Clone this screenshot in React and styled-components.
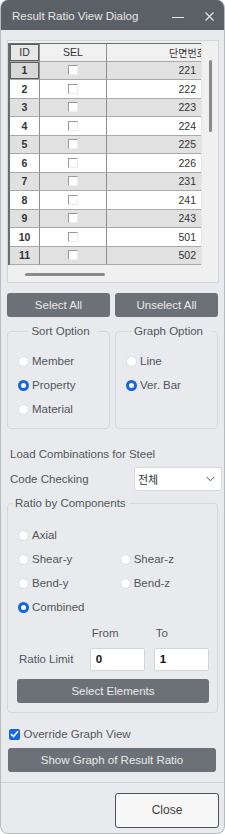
import styled, { createGlobalStyle } from "styled-components";

const GlobalStyle = createGlobalStyle`
  html, body {
    margin: 0;
    padding: 0;
    background: #ffffff;
  }
  * {
    box-sizing: border-box;
  }
`;

const rows = [221, 222, 223, 224, 225, 226, 231, 241, 243, 501, 502];

function Radio({ checked, children }) {
  return (
    <RadioRow>
      <RadioDot checked={checked} />
      <span>{children}</span>
    </RadioRow>
  );
}

function App() {
  return (
    <>
      <GlobalStyle />
      <Dialog>
        <TitleBar>
          <Title>Result Ratio View Dialog</Title>
          <TitleIcons>
            <svg width="12" height="12" viewBox="0 0 12 12">
              <line x1="0" y1="6.5" x2="12" y2="6.5" stroke="#e4e4e4" strokeWidth="1.2" />
            </svg>
            <svg width="9" height="9" viewBox="0 0 9 9">
              <path d="M0.5 0.5 L8.5 8.5 M8.5 0.5 L0.5 8.5" stroke="#e4e4e4" strokeWidth="1.2" />
            </svg>
          </TitleIcons>
        </TitleBar>

        <Content>
          <GridPanel>
            <Viewport>
              <GridRow header>
                <Cell focus center>ID</Cell>
                <Cell center>SEL</Cell>
                <HeadClip>단면번호</HeadClip>
              </GridRow>
              {rows.map((v, i) => (
                <GridRow key={v} odd={i % 2 === 0}>
                  <Cell center bold focus={i === 0}>
                    {i + 1}
                  </Cell>
                  <Cell center>
                    <SmallBox />
                  </Cell>
                  <Cell right>{v}</Cell>
                </GridRow>
              ))}
            </Viewport>
            <VScroll>
              <VThumb />
            </VScroll>
            <HScroll>
              <HThumb />
            </HScroll>
          </GridPanel>

          <ButtonRow>
            <DarkButton>Select All</DarkButton>
            <DarkButton>Unselect All</DarkButton>
          </ButtonRow>

          <OptionRow>
            <Group>
              <Legend center>Sort Option</Legend>
              <Radio>Member</Radio>
              <Radio checked>Property</Radio>
              <Radio>Material</Radio>
            </Group>
            <Group>
              <Legend center>Graph Option</Legend>
              <Radio>Line</Radio>
              <Radio checked>Ver. Bar</Radio>
            </Group>
          </OptionRow>

          <Label top={18}>Load Combinations for Steel</Label>
          <CodeRow>
            <Label>Code Checking</Label>
            <Select>
              <span>전체</span>
              <svg width="9" height="6" viewBox="0 0 9 6">
                <path d="M0.5 0.8 L4.5 4.8 L8.5 0.8" fill="none" stroke="#555" strokeWidth="1" />
              </svg>
            </Select>
          </CodeRow>

          <RatioGroup>
            <Legend>Ratio by Components</Legend>
            <RadioGrid>
              <Radio>Axial</Radio>
              <div />
              <Radio>Shear-y</Radio>
              <Radio>Shear-z</Radio>
              <Radio>Bend-y</Radio>
              <Radio>Bend-z</Radio>
              <Radio checked>Combined</Radio>
            </RadioGrid>
            <LimitGrid>
              <span />
              <SubLabel>From</SubLabel>
              <SubLabel>To</SubLabel>
              <LimitLabel>Ratio Limit</LimitLabel>
              <Input>0</Input>
              <Input>1</Input>
            </LimitGrid>
            <WideButton>Select Elements</WideButton>
          </RatioGroup>

          <CheckRow>
            <CheckBox>
              <svg width="9" height="8" viewBox="0 0 9 8">
                <path d="M1 4.2 L3.5 6.5 L8 1.2" fill="none" stroke="#fff" strokeWidth="1.6" />
              </svg>
            </CheckBox>
            <span>Override Graph View</span>
          </CheckRow>
          <GraphButton>Show Graph of Result Ratio</GraphButton>
        </Content>

        <Separator />
        <Footer>
          <CloseButton>Close</CloseButton>
        </Footer>
      </Dialog>
    </>
  );
}

const Dialog = styled.div`
  width: 225px;
  height: 834px;
  background: #e9eaed;
  border-radius: 8px;
  border: 1px solid #b9bbbf;
  border-top: none;
  overflow: hidden;
  display: flex;
  flex-direction: column;
  font-family: "Liberation Sans", "Noto Sans CJK KR", sans-serif;
  font-size: 11px;
  color: #52565b;
`;

const TitleBar = styled.div`
  height: 30px;
  flex: none;
  background: #5b6066;
  display: flex;
  align-items: center;
  justify-content: space-between;
  padding: 2px 10px 0 11px;
`;

const Title = styled.div`
  color: #e6e6e6;
  font-size: 11.5px;
`;

const TitleIcons = styled.div`
  display: flex;
  align-items: center;
  gap: 21px;
  padding-top: 1px;
`;

const Content = styled.div`
  display: flex;
  flex-direction: column;
  padding: 0 5px 0 6px;
`;

const GridPanel = styled.div`
  margin-top: 10px;
  height: 243px;
  border: 1px solid #d4d5d8;
  background: #f0f0f0;
  display: grid;
  grid-template-columns: 193px 1fr;
  grid-template-rows: 224px 1fr;
  padding-top: 1.5px;
`;

const Viewport = styled.div`
  grid-column: 1;
  grid-row: 1;
  overflow: hidden;
  border-left: 2px solid #6c6c6c;
  background: #ffffff;
  align-self: start;
`;

const GridRow = styled.div`
  display: grid;
  grid-template-columns: 30px 67px 96px;
  height: ${({ header }) => (header ? "19px" : "18.5px")};
  background: ${({ header, odd }) =>
    header ? "#f1f1f1" : odd ? "#e1e1e1" : "#ffffff"};
  border-top: ${({ header }) => (header ? "1px solid #6c6c6c" : "none")};
  color: #333;
  font-size: 10.5px;
`;

const Cell = styled.div`
  display: flex;
  align-items: center;
  justify-content: ${({ center, right }) =>
    center ? "center" : right ? "flex-end" : "flex-start"};
  padding-right: ${({ right }) => (right ? "6px" : "0")};
  border-right: 1px solid #8f8f8f;
  border-bottom: 1px solid #a9a9a9;
  font-weight: ${({ bold }) => (bold ? 600 : 400)};
  box-shadow: ${({ focus }) => (focus ? "inset 0 0 0 1px #5e5e5e" : "none")};
  background: ${({ focus }) => (focus ? "rgba(0,0,0,0.04)" : "transparent")};
`;

const HeadClip = styled.div`
  display: flex;
  align-items: center;
  padding-left: 62px;
  white-space: nowrap;
  overflow: hidden;
  border-bottom: 1px solid #a9a9a9;
  font-size: 10px;
  color: #333;
`;

const SmallBox = styled.span`
  width: 10px;
  height: 10px;
  background: #ffffff;
  border-top: 1px solid #9a9a9a;
  border-left: 1px solid #9a9a9a;
  border-right: 1px solid #ececec;
  border-bottom: 1px solid #ececec;
`;

const VScroll = styled.div`
  grid-column: 2;
  grid-row: 1;
  border-left: 1px solid #e4e4e4;
  display: flex;
  justify-content: center;
  padding-top: 17px;
`;

const VThumb = styled.div`
  width: 3px;
  height: 72px;
  border-radius: 2px;
  background: #8a8a8a;
`;

const HScroll = styled.div`
  grid-column: 1;
  grid-row: 2;
  display: flex;
  align-items: center;
  padding-left: 17px;
`;

const HThumb = styled.div`
  width: 80px;
  height: 3px;
  border-radius: 2px;
  background: #8a8a8a;
`;

const ButtonRow = styled.div`
  margin-top: 10px;
  display: grid;
  grid-template-columns: 1fr 1fr;
  gap: 5px;
  padding-right: 1px;
`;

const DarkButton = styled.div`
  height: 24px;
  border-radius: 3px;
  background: #6c7177;
  color: #e8e9ea;
  font-size: 11.5px;
  display: flex;
  align-items: center;
  justify-content: center;
`;

const OptionRow = styled.div`
  margin-top: 7px;
  display: grid;
  grid-template-columns: 1fr 1fr;
  gap: 5px;
  padding-right: 1px;
`;

const Group = styled.fieldset`
  margin: 0;
  min-width: 0;
  height: 104.5px;
  padding: 11px 0 0 10px;
  border: 1px solid #d5d7db;
  border-radius: 4px;
`;

const Legend = styled.legend`
  margin: ${({ center }) => (center ? "0 auto" : "0 0 0 -6px")};
  padding: ${({ center }) => (center ? "0 9px 0 3px" : "0 3px")};
  line-height: 14px;
  font-size: 11.5px;
  color: #52565b;
`;

const RadioRow = styled.div`
  height: 24px;
  display: flex;
  align-items: center;
  gap: 3px;
  font-size: 11.5px;
  color: #52565b;
  white-space: nowrap;
`;

const RadioDot = styled.span`
  width: 11px;
  height: 11px;
  border-radius: 50%;
  flex: none;
  background: #ffffff;
  border: ${({ checked }) =>
    checked ? "3.5px solid #1467e0" : "1px solid #dadce0"};
`;

const Label = styled.div`
  margin-top: ${({ top }) => (top ? `${top}px` : "0")};
  line-height: 14px;
  font-size: 11.5px;
  color: #52565b;
  padding-left: 3px;
  white-space: nowrap;
`;

const CodeRow = styled.div`
  margin-top: 6px;
  display: flex;
  align-items: center;
  justify-content: space-between;
  margin-right: -3px;
`;

const Select = styled.div`
  width: 88px;
  height: 24px;
  background: #ffffff;
  border: 1px solid #d6d8dc;
  border-radius: 3px;
  display: flex;
  align-items: center;
  justify-content: space-between;
  padding: 0 6px 0 3px;
  font-family: "Noto Sans CJK KR", sans-serif;
  font-size: 11px;
  color: #333;
`;

const RatioGroup = styled(Group)`
  margin-top: 5.5px;
  height: auto;
  padding: 13px 8px 9px 10px;
  margin-right: 1px;
`;

const RadioGrid = styled.div`
  display: grid;
  grid-template-columns: 101.7px 1fr;
`;

const LimitGrid = styled.div`
  margin-top: 7px;
  display: grid;
  grid-template-columns: 62.7px 55px 55px;
  grid-template-rows: 14px 23px;
  column-gap: 9px;
  row-gap: 7.5px;
  align-items: center;
`;

const LimitLabel = styled.div`
  font-size: 11.5px;
  line-height: 14px;
  padding-left: 1px;
  white-space: nowrap;
  color: #52565b;
`;

const SubLabel = styled.div`
  font-size: 11.5px;
  line-height: 14px;
  padding-left: 2px;
  color: #52565b;
`;

const Input = styled.div`
  height: 23px;
  background: #ffffff;
  border: 1px solid #d3d5d9;
  border-radius: 2px;
  display: flex;
  align-items: center;
  padding-left: 5px;
  font-size: 11.5px;
  font-weight: 600;
  color: #111;
`;

const WideButton = styled(DarkButton)`
  margin: 8.5px 0 0 -1px;
`;

const CheckRow = styled.div`
  margin-top: 14px;
  height: 14px;
  display: flex;
  align-items: center;
  gap: 3.5px;
  padding-left: 2px;
  font-size: 11.5px;
  color: #52565b;
`;

const CheckBox = styled.span`
  width: 11px;
  height: 11px;
  border-radius: 2px;
  background: #1467e0;
  display: flex;
  align-items: center;
  justify-content: center;
`;

const GraphButton = styled(DarkButton)`
  margin-top: 6.5px;
  width: 208px;
  margin-left: 1px;
`;

const Separator = styled.div`
  margin-top: 10px;
  height: 1px;
  background: #cfd1d5;
`;

const Footer = styled.div`
  display: flex;
  justify-content: flex-end;
  padding: 10px 5px 0 0;
`;

const CloseButton = styled.div`
  width: 104px;
  height: 35px;
  border: 1px solid #4f5256;
  border-radius: 3px;
  background: #f7f7f8;
  display: flex;
  align-items: center;
  justify-content: center;
  font-size: 12px;
  color: #3c3f43;
`;

export default App;
